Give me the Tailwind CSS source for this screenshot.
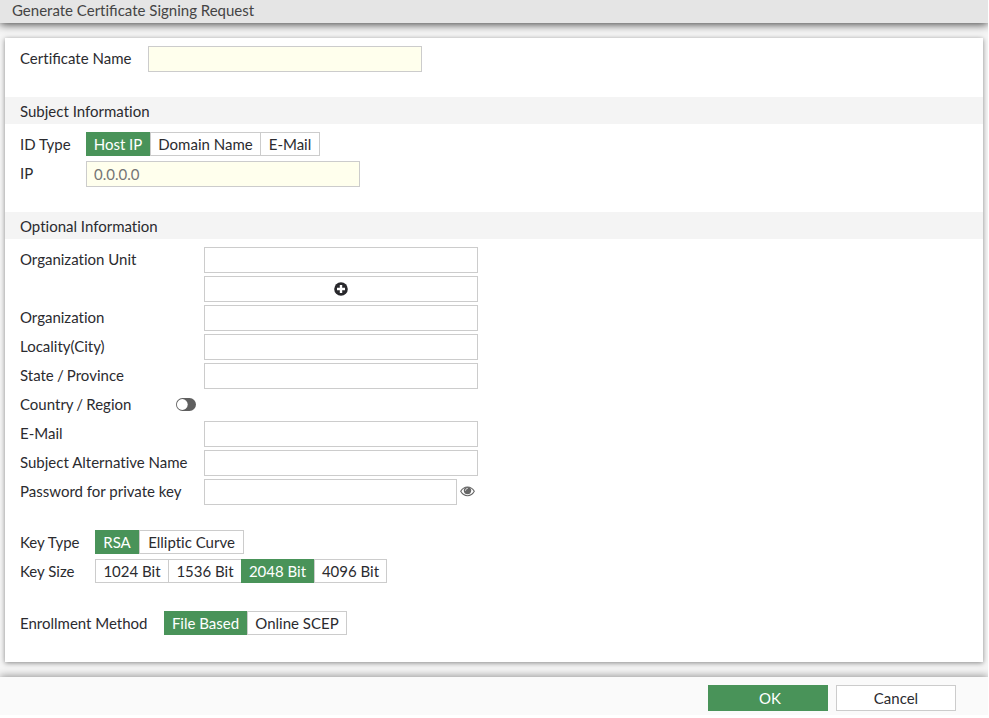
<!DOCTYPE html>
<html lang="en">
<head>
    <meta charset="UTF-8">
    <meta name="viewport" content="width=device-width, initial-scale=1.0">
    <title>Generate Certificate Signing Request</title>
    <script src="https://cdn.jsdelivr.net/npm/@tailwindcss/browser@4"></script>
</head>
<body class="bg-white overflow-hidden font-['Lato',sans-serif] text-[15px] leading-[24px] text-[#2b2b2f] [font-variant-ligatures:none]">
    <div class="w-[988px] h-[715px] flex flex-col overflow-hidden bg-[#f5f5f5]">
        <!-- Title bar -->
        <header class="relative z-10 h-[23px] shrink-0 bg-[#e5e5e5] pl-3 leading-[20px] text-[#444] shadow-[0_1px_10px_rgba(0,0,0,0.8)]">Generate Certi<span class="[font-variant-ligatures:normal]">fi</span>cate Signing Request</header>

        <main class="flex-1 pt-[15px] px-[5px]">
            <form class="h-[624px] bg-white pt-2 shadow-[0_1px_5px_rgba(0,0,0,0.45)]">
                <div class="flex h-[26px] pl-[15px]">
                    <label for="certName" class="w-[128px]">Certi<span class="[font-variant-ligatures:normal]">fi</span>cate Name</label>
                    <input id="certName" type="text" class="w-[274px] h-[26px] border border-[#ccc] bg-[#ffffed] px-2">
                </div>

                <!-- Subject information -->
                <h2 class="mt-[25px] h-[27px] bg-[#f4f4f4] pl-[15px] leading-[29px]">Subject Information</h2>
                <div class="mt-2 pl-[15px]">
                    <div class="flex h-[29px]">
                        <span class="w-[66px]">ID Type</span>
                        <div class="flex h-6 leading-[22px] text-center whitespace-nowrap">
                            <button type="button" class="w-[64px] border border-[#499359] bg-[#499359] text-white">Host IP</button>
                            <button type="button" class="w-[110px] border border-r-0 border-[#ccc]">Domain Name</button>
                            <button type="button" class="w-[60px] border border-[#ccc]">E-Mail</button>
                        </div>
                    </div>
                    <div class="flex h-[26px]">
                        <label for="ip" class="w-[66px]">IP</label>
                        <input id="ip" type="text" placeholder="0.0.0.0" class="w-[274px] h-[26px] border border-[#ccc] bg-[#ffffed] px-[7px] placeholder:text-[#757575]">
                    </div>
                </div>

                <!-- Optional information -->
                <h2 class="mt-[25px] h-[27px] bg-[#f4f4f4] pl-[15px] leading-[29px]">Optional Information</h2>
                <div class="mt-2 pl-[15px] grid grid-cols-[184px_274px] auto-rows-[26px] gap-y-[3px]">
                    <label for="orgUnit">Organization Unit</label>
                    <input id="orgUnit" type="text" class="border border-[#ccc] px-2">
                    <button type="button" aria-label="Add organization unit" class="col-start-2 flex items-center justify-center border border-[#ccc]">
                        <svg class="size-[14px]" viewBox="0 0 14 14"><circle cx="7" cy="7" r="6.8" fill="#28282c"/><path d="M7 3v8M3 7h8" stroke="#fff" stroke-width="2.4"/></svg>
                    </button>
                    <label for="org">Organization</label>
                    <input id="org" type="text" class="border border-[#ccc] px-2">
                    <label for="city">Locality(City)</label>
                    <input id="city" type="text" class="border border-[#ccc] px-2">
                    <label for="state" class="[word-spacing:-0.7px]">State / Province</label>
                    <input id="state" type="text" class="border border-[#ccc] px-2">
                    <div class="col-span-2 flex h-6 items-center">
                        <span class="w-[156px] [word-spacing:-0.7px]">Country / Region</span>
                        <svg class="w-5 h-[13px]" viewBox="0 0 20 13"><rect width="20" height="13" rx="6.5" fill="#5f5f5f"/><circle cx="6.3" cy="6.5" r="5.4" fill="#fff"/></svg>
                    </div>
                    <label for="email">E-Mail</label>
                    <input id="email" type="text" class="border border-[#ccc] px-2">
                    <label for="san">Subject Alternative Name</label>
                    <input id="san" type="text" class="border border-[#ccc] px-2">
                    <label for="password">Password for private key</label>
                    <div class="flex">
                        <input id="password" type="password" class="w-[253px] h-[26px] border border-[#ccc] px-2">
                        <svg class="mt-[7px] ml-[3px] w-[15px] h-[11px]" viewBox="0 0 15 11"><path d="M.7 5.3C2.3 2.6 4.8 1 7.5 1s5.200 1.600 6.800 4.300C12.700 8.200 10.200 9.700 7.500 9.700S2.300 8.200.7 5.300Z" fill="#fff" stroke="#666" stroke-width="1.100"/><circle cx="7.500" cy="4.600" r="3.700" fill="#666"/><path d="M5.400 4.400a2.100 2.100 0 0 1 2.100-2.100" fill="none" stroke="#fff" stroke-width=".7" stroke-linecap="round"/></svg>
                    </div>
                </div>

                <!-- Key options -->
                <div class="mt-[25px] pl-[15px]">
                    <div class="flex h-[29px]">
                        <span class="w-[75px]">Key Type</span>
                        <div class="flex h-6 leading-[22px] text-center whitespace-nowrap">
                            <button type="button" class="w-[44px] border border-[#499359] bg-[#499359] text-white">RSA</button>
                            <button type="button" class="w-[105px] border border-[#ccc]">Elliptic Curve</button>
                        </div>
                    </div>
                    <div class="flex h-6">
                        <span class="w-[75px]">Key Size</span>
                        <div class="flex h-6 leading-[22px] text-center whitespace-nowrap">
                            <button type="button" class="w-[73px] border border-r-0 border-[#ccc]">1024 Bit</button>
                            <button type="button" class="w-[73px] border border-r-0 border-[#ccc]">1536 Bit</button>
                            <button type="button" class="w-[73px] border border-[#499359] bg-[#499359] text-white">2048 Bit</button>
                            <button type="button" class="w-[73px] border border-[#ccc]">4096 Bit</button>
                        </div>
                    </div>
                </div>

                <div class="mt-7 pl-[15px] flex h-6">
                    <span class="w-[144px]">Enrollment Method</span>
                    <div class="flex h-6 leading-[22px] text-center whitespace-nowrap">
                        <button type="button" class="w-[83px] border border-[#499359] bg-[#499359] text-white">File Based</button>
                        <button type="button" class="w-[100px] border border-[#ccc]">Online SCEP</button>
                    </div>
                </div>
            </form>
        </main>

        <!-- Actions -->
        <footer class="relative h-[38px] shrink-0 flex justify-end gap-2 bg-[#fafafa] pt-2 pr-8 leading-[24px] shadow-[0_-1px_8px_rgba(0,0,0,0.4)]">
            <button type="button" class="w-[120px] h-[26px] pl-1 border border-[#499359] bg-[#499359] text-white">OK</button>
            <button type="button" class="w-[120px] h-[26px] border border-[#ccc] bg-white">Cancel</button>
        </footer>
    </div>
</body>
</html>
